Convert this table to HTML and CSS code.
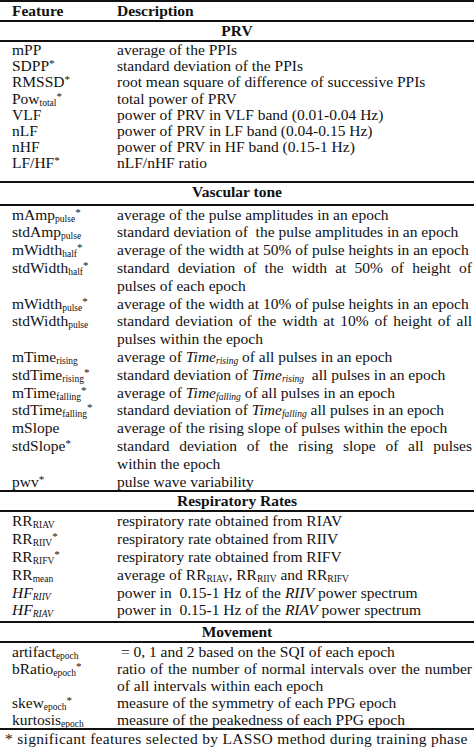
FILE: index.html
```html
<!DOCTYPE html>
<html>
<head>
<meta charset="utf-8">
<link rel="stylesheet" href="styles.css">
</head>
<body>
<table class="feat">
  <thead>
    <tr class="hdr"><th class="c1">Feature</th><th class="c2">Description</th></tr>
  </thead>
  <tbody class="prv">
    <tr class="sec"><td colspan="2">PRV</td></tr>
    <tr><td class="c1">mPP</td><td class="c2">average of the PPIs</td></tr>
    <tr><td class="c1">SDPP<sup>*</sup></td><td class="c2">standard deviation of the PPIs</td></tr>
    <tr><td class="c1">RMSSD<sup>*</sup></td><td class="c2">root mean square of difference of successive PPIs</td></tr>
    <tr><td class="c1">Pow<sub>total</sub><sup>*</sup></td><td class="c2">total power of PRV</td></tr>
    <tr><td class="c1">VLF</td><td class="c2">power of PRV in VLF band (0.01-0.04 Hz)</td></tr>
    <tr><td class="c1">nLF</td><td class="c2">power of PRV in LF band (0.04-0.15 Hz)</td></tr>
    <tr><td class="c1">nHF</td><td class="c2">power of PRV in HF band (0.15-1 Hz)</td></tr>
    <tr class="last"><td class="c1">LF/HF<sup>*</sup></td><td class="c2">nLF/nHF ratio</td></tr>
  </tbody>
  <tbody class="vasc">
    <tr class="sec"><td colspan="2">Vascular tone</td></tr>
    <tr><td class="c1">mAmp<sub>pulse</sub><sup>*</sup></td><td class="c2">average of the pulse amplitudes in an epoch</td></tr>
    <tr><td class="c1">stdAmp<sub>pulse</sub></td><td class="c2">standard deviation of&nbsp; the pulse amplitudes in an epoch</td></tr>
    <tr><td class="c1">mWidth<sub>half</sub><sup>*</sup></td><td class="c2">average of the width at 50% of pulse heights in an epoch</td></tr>
    <tr><td class="c1">stdWidth<sub>half</sub><sup>*</sup></td><td class="c2"><span class="jl">standard deviation of the width at 50% of height of</span><span class="ln">pulses of each epoch</span></td></tr>
    <tr><td class="c1">mWidth<sub>pulse</sub><sup>*</sup></td><td class="c2">average of the width at 10% of pulse heights in an epoch</td></tr>
    <tr><td class="c1">stdWidth<sub>pulse</sub></td><td class="c2"><span class="jl">standard deviation of the width at 10% of height of all</span><span class="ln">pulses within the epoch</span></td></tr>
    <tr><td class="c1">mTime<sub>rising</sub></td><td class="c2">average of <i>Time<sub>rising</sub></i> of all pulses in an epoch</td></tr>
    <tr><td class="c1">stdTime<sub>rising</sub><sup>*</sup></td><td class="c2">standard deviation of <i>Time<sub>rising</sub></i>&nbsp; all pulses in an epoch</td></tr>
    <tr><td class="c1">mTime<sub>falling</sub><sup>*</sup></td><td class="c2">average of <i>Time<sub>falling</sub></i> of all pulses in an epoch</td></tr>
    <tr><td class="c1">stdTime<sub>falling</sub><sup>*</sup></td><td class="c2">standard deviation of <i>Time<sub>falling</sub></i> all pulses in an epoch</td></tr>
    <tr><td class="c1">mSlope</td><td class="c2">average of the rising slope of pulses within the epoch</td></tr>
    <tr><td class="c1">stdSlope<sup>*</sup></td><td class="c2"><span class="jl">standard deviation of the rising slope of all pulses</span><span class="ln">within the epoch</span></td></tr>
    <tr><td class="c1">pwv<sup>*</sup></td><td class="c2">pulse wave variability</td></tr>
  </tbody>
  <tbody class="resp">
    <tr class="sec"><td colspan="2">Respiratory Rates</td></tr>
    <tr><td class="c1">RR<sub>RIAV</sub></td><td class="c2">respiratory rate obtained from RIAV</td></tr>
    <tr><td class="c1">RR<sub>RIIV</sub><sup>*</sup></td><td class="c2">respiratory rate obtained from RIIV</td></tr>
    <tr><td class="c1">RR<sub>RIFV</sub><sup>*</sup></td><td class="c2">respiratory rate obtained from RIFV</td></tr>
    <tr><td class="c1">RR<sub>mean</sub></td><td class="c2">average of RR<sub>RIAV</sub>, RR<sub>RIIV</sub> and RR<sub>RIFV</sub></td></tr>
    <tr><td class="c1"><i>HF<sub>RIIV</sub></i></td><td class="c2">power in&nbsp; 0.15-1 Hz of the <i>RIIV</i> power spectrum</td></tr>
    <tr class="last"><td class="c1"><i>HF<sub>RIAV</sub></i></td><td class="c2">power in&nbsp; 0.15-1 Hz of the <i>RIAV</i> power spectrum</td></tr>
  </tbody>
  <tbody class="move">
    <tr class="sec"><td colspan="2">Movement</td></tr>
    <tr><td class="c1">artifact<sub>epoch</sub></td><td class="c2">&nbsp;= 0, 1 and 2 based on the SQI of each epoch</td></tr>
    <tr><td class="c1">bRatio<sub>epoch</sub><sup>*</sup></td><td class="c2"><span class="jl">ratio of the number of normal intervals over the number</span><span class="ln">of all intervals within each epoch</span></td></tr>
    <tr><td class="c1">skew<sub>epoch</sub><sup>*</sup></td><td class="c2">measure of the symmetry of each PPG epoch</td></tr>
    <tr><td class="c1">kurtosis<sub>epoch</sub></td><td class="c2">measure of the peakedness of each PPG epoch</td></tr>
  </tbody>
</table>
<p class="note">* significant features selected by LASSO method during training phase</p>
</body>
</html>
```
FILE: styles.css
```css
html, body {
  margin: 0;
  padding: 0;
  background: #fff;
}
body {
  font-family: "Liberation Serif", "Times New Roman", serif;
  font-size: 15.5px;
  color: #111;
  width: 474px;
}
.feat {
  width: 474px;
  border-collapse: collapse;
  border-top: 2px solid #111;
  border-bottom: 2px solid #111;
}
.feat th, .feat td {
  padding: 0;
  vertical-align: top;
  text-align: left;
}
.hdr th {
  font-weight: bold;
  height: 18px;
  line-height: 18px;
  border-bottom: 1px solid #111;
}
.c1 {
  width: 105px;
  padding-left: 12px !important;
  white-space: nowrap;
}
.c2 {
  padding-right: 2px !important;
  text-align: justify;
  white-space: nowrap;
}
.sec td {
  text-align: center !important;
  font-weight: bold;
  border-top: 2px solid #111;
  border-bottom: 2px solid #111;
  height: 18px;
  line-height: 18px;
}
.prv td { line-height: 16.2px; }
.prv .last td { padding-bottom: 9px; }
.vasc td, .resp td { line-height: 17.8px; }
.resp .last td { padding-bottom: 2px; }
.move td { line-height: 17px; }
.vasc .sec td { padding-bottom: 3px; }
.sec td { line-height: 18px !important; }
.jl {
  display: block;
  text-align: justify;
  text-align-last: justify;
}
.ln {
  display: block;
}
sub {
  font-size: 9.5px;
  vertical-align: -2px;
  line-height: 0;
}
sup {
  font-size: 11px;
  vertical-align: 4px;
  line-height: 0;
}
.note {
  margin: 0;
  padding-left: 5px;
  line-height: 18px;
  letter-spacing: 0.3px;
}
```
